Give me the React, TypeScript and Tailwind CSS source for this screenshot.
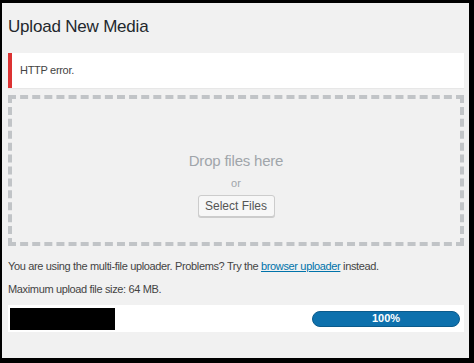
export default function App() {
  return (
    <div className="w-[474px] h-[363px] bg-black pt-[3px] pl-[2px] pr-[5px] pb-[5px] font-['Liberation_Sans',Arial,sans-serif]">
      <div className="h-full bg-[#f1f1f1] pl-[6px] pr-[5px] pt-[12px]">
        <h1 className="text-[17px] leading-6 tracking-[-0.2px] text-[#23282d]">Upload New Media</h1>

        <div className="mt-[14px] h-[35px] bg-white border-l-4 border-[#dc3232] flex items-center pl-[8px] shadow-[0_1px_1px_rgba(0,0,0,0.04)]">
          <p className="text-[11px] tracking-[-0.3px] text-[#444]">HTTP error.</p>
        </div>

        <div className="mt-[7px] h-[151px] border-4 border-dashed border-[#c1c4c7] flex flex-col items-center pt-[52px]">
          <p className="text-[15px] leading-5 tracking-[-0.2px] text-[#a0a5aa]">Drop files here</p>
          <p className="mt-[5px] text-[11px] leading-[14px] text-[#a0a5aa]">or</p>
          <button className="mt-[5px] h-[22px] w-[77px] bg-[#f7f7f7] border border-[#cccccc] rounded-[3px] shadow-[0_1px_0_#cccccc] text-[12px] leading-none text-[#555]">
            Select Files
          </button>
        </div>

        <p className="mt-[11px] text-[11px] leading-[18px] tracking-[-0.35px] text-[#444]">
          You are using the multi-file uploader. Problems? Try the{" "}
          <a className="text-[#0073aa] underline">browser uploader</a> instead.
        </p>
        <p className="mt-[5px] text-[11px] leading-[18px] tracking-[-0.35px] text-[#444]">Maximum upload file size: 64 MB.</p>

        <div className="mt-[7px] h-[27px] bg-white flex items-center justify-between pl-[2px] pr-[4px]">
          <div className="w-[105px] h-[22px] bg-black" />
          <div className="w-[148px] h-[16px] rounded-full bg-[#0e71ad] border border-[#0b5b8c] flex items-center justify-center">
            <span className="text-[11px] font-bold leading-none text-white">100%</span>
          </div>
        </div>
      </div>
    </div>
  );
}
